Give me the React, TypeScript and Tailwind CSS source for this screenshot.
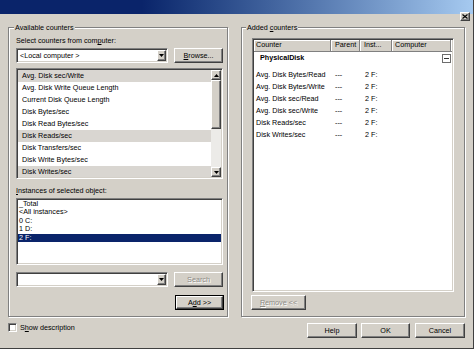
import React from "react";

const raised =
  "bg-[#d4d0c8] border border-t-white border-l-white border-r-[#404040] border-b-[#404040] shadow-[inset_-1px_-1px_0_#808080]";
const sunken =
  "border border-t-[#808080] border-l-[#808080] border-r-white border-b-white shadow-[inset_1px_1px_0_#404040,inset_-1px_-1px_0_#d4d0c8]";
const disabledText = "text-[#8c8a85] [text-shadow:1px_1px_0_#fff]";

function Tri({ down }: { down?: boolean }) {
  return (
    <svg width="5" height="3" viewBox="0 0 5 3">
      <path d={down ? "M0 0H5L2.5 3Z" : "M0 3H5L2.5 0Z"} fill="#000" />
    </svg>
  );
}

function Combo({ text }: { text?: string }) {
  return (
    <div className={`${sunken} bg-white w-[152px] h-[15px] p-px flex items-stretch`}>
      <div className="flex-1 pl-[2px] leading-[11px] whitespace-nowrap">{text}</div>
      <div className={`${raised} w-[9px] flex items-center justify-center`}>
        <Tri down />
      </div>
    </div>
  );
}

function Btn({
  children,
  w,
  disabled,
}: {
  children: React.ReactNode;
  w: string;
  disabled?: boolean;
}) {
  return (
    <div
      className={`${raised} ${w} h-[15px] flex items-center justify-center leading-[9px] ${
        disabled ? disabledText : ""
      }`}
    >
      {children}
    </div>
  );
}

const counters = [
  "Avg. Disk sec/Write",
  "Avg. Disk Write Queue Length",
  "Current Disk Queue Length",
  "Disk Bytes/sec",
  "Disk Read Bytes/sec",
  "Disk Reads/sec",
  "Disk Transfers/sec",
  "Disk Write Bytes/sec",
  "Disk Writes/sec",
];
const selectedCounters = [0, 5, 8];

const instances = ["_Total", "<All instances>", "0 C:", "1 D:", "2 F:"];

const added = [
  "Avg. Disk Bytes/Read",
  "Avg. Disk Bytes/Write",
  "Avg. Disk sec/Read",
  "Avg. Disk sec/Write",
  "Disk Reads/sec",
  "Disk Writes/sec",
];

export default function App() {
  return (
    <div className="relative w-[474px] h-[349px] overflow-hidden bg-[#d4d0c8] text-black font-['Liberation_Sans',Arial,sans-serif] text-[7.2px] leading-[9px] flex flex-col border-r border-b border-r-[#404040] border-b-[#404040]">
      {/* title bar */}
      <div className="h-[14px] shrink-0 bg-linear-to-r from-[#0a246a] from-30% to-[#a6caf0]" />
      {/* close box */}
      <div className={`${raised} absolute left-[460px] top-[12px] w-[10px] h-[9px] flex items-center justify-center`}>
        <svg width="6" height="5" viewBox="0 0 6 5">
          <path d="M0.5 0.5L5.5 4.5M5.5 0.5L0.5 4.5" stroke="#000" strokeWidth="1.2" />
        </svg>
      </div>

      <div className="flex flex-col pl-[8px] pr-[8px] pt-[9px]">
        <div className="flex gap-[13px]">
          {/* Available counters */}
          <fieldset className="w-[220px] h-[294px] m-0 p-0 border border-[#808080] shadow-[inset_1px_1px_0_#fff,1px_1px_0_#fff]">
            <legend className="ml-[5px] px-[1px] leading-[9px] bg-[#d4d0c8]">Available counters</legend>
            <div className="pl-[7px] pr-[4px] pt-[4px] flex flex-col">
              <div className="leading-[9px]">
                Select counters from com<span className="underline">p</span>uter:
              </div>
              <div className="mt-[3px] flex gap-[6px]">
                <Combo text="<Local computer >" />
                <Btn w="w-[49px]">
                  <span>
                    <span className="underline">B</span>rowse...
                  </span>
                </Btn>
              </div>
              <div className={`${sunken} mt-[5px] h-[111px] bg-white p-px flex overflow-hidden`}>
                <div className="flex-1 flex flex-col overflow-hidden">
                  {counters.map((c, i) => (
                    <div
                      key={c}
                      className={`h-[12px] shrink-0 leading-[12px] pl-[4px] whitespace-nowrap ${
                        selectedCounters.includes(i) ? "bg-[#d9d6d1]" : ""
                      }`}
                    >
                      {c}
                    </div>
                  ))}
                </div>
                <div className="w-[10px] flex flex-col bg-[#ecebe8]">
                  <div className={`${raised} h-[10px] shrink-0 flex items-center justify-center`}>
                    <Tri />
                  </div>
                  <div className={`${raised} h-[49px] shrink-0`} />
                  <div className="flex-1" />
                  <div className={`${raised} h-[10px] shrink-0 flex items-center justify-center`}>
                    <Tri down />
                  </div>
                </div>
              </div>
              <div className="mt-[7px] leading-[9px]">
                <span className="underline">I</span>nstances of selected object:
              </div>
              <div className={`${sunken} mt-[3px] h-[67px] bg-white p-px flex flex-col overflow-hidden`}>
                {instances.map((t, i) => (
                  <div
                    key={t}
                    className={`h-[8.4px] shrink-0 leading-[8.4px] pl-[1px] whitespace-nowrap ${
                      i === 4 ? "bg-[#0a246a] text-white" : ""
                    }`}
                  >
                    {t}
                  </div>
                ))}
              </div>
              <div className="mt-[7px] flex gap-[6px]">
                <Combo />
                <Btn w="w-[49px]" disabled>
                  Search
                </Btn>
              </div>
              <div className="mt-[8px] flex justify-end">
                <div className="border border-black mr-[-1px]">
                  <div className={`${raised} w-[47px] h-[13px] flex items-center justify-center`}>
                    <span>
                      A<span className="underline">d</span>d &gt;&gt;
                    </span>
                  </div>
                </div>
              </div>
            </div>
          </fieldset>

          {/* Added counters */}
          <fieldset className="w-[224px] h-[294px] m-0 p-0 border border-[#808080] shadow-[inset_1px_1px_0_#fff,1px_1px_0_#fff]">
            <legend className="ml-[4px] px-[1px] leading-[9px] bg-[#d4d0c8]">
              Added <span className="underline">c</span>ounters
            </legend>
            <div className="pl-[10px] pr-[10px] pt-[6px] flex flex-col">
              <div className={`${sunken} h-[254px] bg-white p-px flex flex-col overflow-hidden`}>
                <div className="h-[12px] shrink-0 flex bg-[#d4d0c8]">
                  {[
                    ["Counter", "w-[77px] pl-[2px]"],
                    ["Parent", "w-[29px] pl-[4px]"],
                    ["Inst...", "w-[32px] pl-[4px]"],
                    ["Computer", "w-[59px] pl-[3px]"],
                  ].map(([t, c]) => (
                    <div
                      key={t}
                      className={`${c} shrink-0 leading-[10px] whitespace-nowrap border-r border-b border-r-[#808080] border-b-[#808080] shadow-[inset_1px_1px_0_#fff]`}
                    >
                      {t}
                    </div>
                  ))}
                  <div className="flex-1 border-b border-b-[#808080] shadow-[inset_1px_1px_0_#fff]" />
                </div>
                <div className="h-[12px] shrink-0 flex items-center pl-[6px] pr-[1px]">
                  <span className="flex-1 font-bold leading-[12px]">PhysicalDisk</span>
                  <svg width="9" height="9" viewBox="0 0 9 9">
                    <rect x="0.5" y="0.5" width="8" height="8" fill="#fff" stroke="#6d6d6d" />
                    <path d="M2 4.5H7" stroke="#333" />
                  </svg>
                </div>
                <div className="mt-[5px] flex flex-col">
                  {added.map((a) => (
                    <div key={a} className="h-[12px] leading-[12px] flex whitespace-nowrap">
                      <div className="w-[77px] pl-[2px] shrink-0">{a}</div>
                      <div className="w-[29px] pl-[4px] shrink-0">---</div>
                      <div className="w-[32px] pl-[5px] shrink-0">2 F:</div>
                    </div>
                  ))}
                </div>
              </div>
              <div className="mt-[3px] ml-[-1px]">
                <Btn w="w-[55px]" disabled>
                  <span>
                    <span className="underline">R</span>emove &lt;&lt;
                  </span>
                </Btn>
              </div>
            </div>
          </fieldset>
        </div>

        {/* bottom row */}
        <div className="mt-[5px] flex items-start justify-between">
          <div className="flex items-center gap-[3px] pt-[1px]">
            <div className={`${sunken} w-[9px] h-[9px] bg-white`} />
            <span className="leading-[9px]">
              S<span className="underline">h</span>ow description
            </span>
          </div>
          <div className="flex items-start pt-[1px]">
            <Btn w="w-[50px]">Help</Btn>
            <div className="ml-[4px]">
              <Btn w="w-[49px]">OK</Btn>
            </div>
            <div className="ml-[5px]">
              <Btn w="w-[50px]">Cancel</Btn>
            </div>
          </div>
        </div>
      </div>
    </div>
  );
}
